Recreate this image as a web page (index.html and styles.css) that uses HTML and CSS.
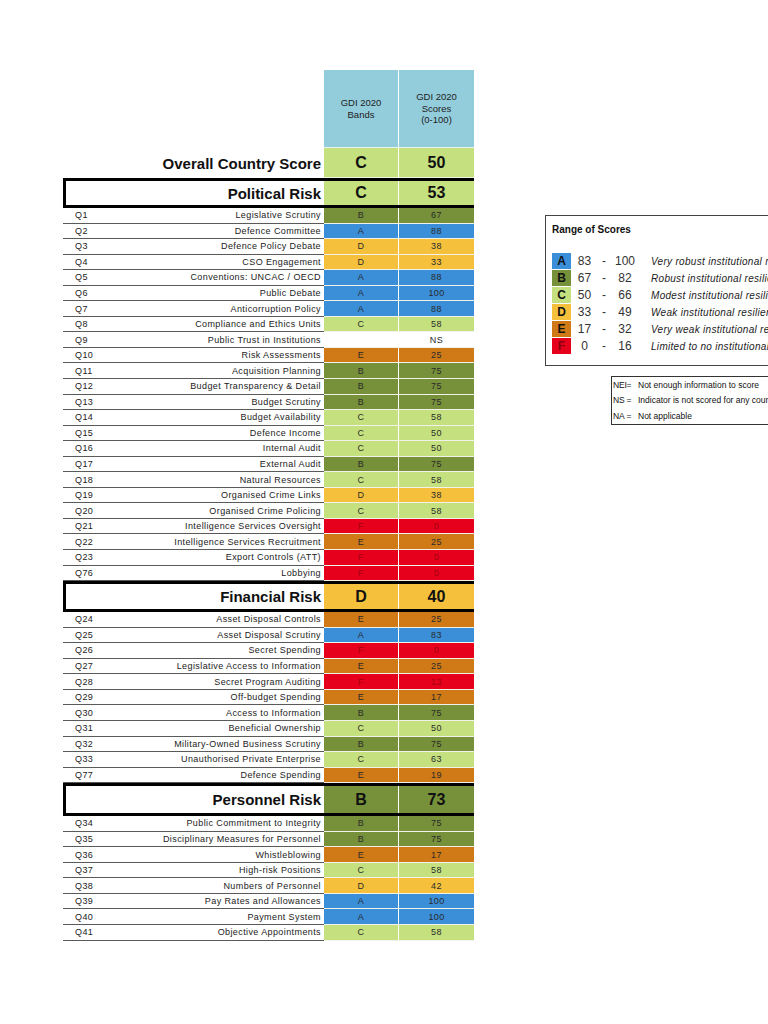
FILE: index.html
```html
<!DOCTYPE html>
<html>
<head>
<meta charset="utf-8">
<link rel="stylesheet" href="styles.css">
</head>
<body>
<div class="page">
  <div class="sheet">
    <div class="head-row">
      <div class="head-lbl"></div>
      <div class="hcell band">GDI 2020<br>Bands</div>
      <div class="hcell score">GDI 2020<br>Scores<br>(0-100)</div>
    </div>
    <div class="overall">
      <div class="big-lbl">Overall Country Score</div>
      <div class="big-cell band c">C</div>
      <div class="big-cell score c">50</div>
    </div>

    <div class="section sec-pol">
      <div class="big-lbl">Political Risk</div>
      <div class="big-cell band c">C</div>
      <div class="big-cell score c">53</div>
    </div>
    <div class="row"><div class="lbl"><span>Q1</span><span>Legislative Scrutiny</span></div><div class="cell band b">B</div><div class="cell score b">67</div></div>
    <div class="row"><div class="lbl"><span>Q2</span><span>Defence Committee</span></div><div class="cell band a">A</div><div class="cell score a">88</div></div>
    <div class="row"><div class="lbl"><span>Q3</span><span>Defence Policy Debate</span></div><div class="cell band d">D</div><div class="cell score d">38</div></div>
    <div class="row"><div class="lbl"><span>Q4</span><span>CSO Engagement</span></div><div class="cell band d">D</div><div class="cell score d">33</div></div>
    <div class="row"><div class="lbl"><span>Q5</span><span>Conventions: UNCAC / OECD</span></div><div class="cell band a">A</div><div class="cell score a">88</div></div>
    <div class="row"><div class="lbl"><span>Q6</span><span>Public Debate</span></div><div class="cell band a">A</div><div class="cell score a">100</div></div>
    <div class="row"><div class="lbl"><span>Q7</span><span>Anticorruption Policy</span></div><div class="cell band a">A</div><div class="cell score a">88</div></div>
    <div class="row"><div class="lbl"><span>Q8</span><span>Compliance and Ethics Units</span></div><div class="cell band c">C</div><div class="cell score c">58</div></div>
    <div class="row"><div class="lbl"><span>Q9</span><span>Public Trust in Institutions</span></div><div class="cell band ns"></div><div class="cell score ns">NS</div></div>
    <div class="row"><div class="lbl"><span>Q10</span><span>Risk Assessments</span></div><div class="cell band e">E</div><div class="cell score e">25</div></div>
    <div class="row"><div class="lbl"><span>Q11</span><span>Acquisition Planning</span></div><div class="cell band b">B</div><div class="cell score b">75</div></div>
    <div class="row"><div class="lbl"><span>Q12</span><span>Budget Transparency &amp; Detail</span></div><div class="cell band b">B</div><div class="cell score b">75</div></div>
    <div class="row"><div class="lbl"><span>Q13</span><span>Budget Scrutiny</span></div><div class="cell band b">B</div><div class="cell score b">75</div></div>
    <div class="row"><div class="lbl"><span>Q14</span><span>Budget Availability</span></div><div class="cell band c">C</div><div class="cell score c">58</div></div>
    <div class="row"><div class="lbl"><span>Q15</span><span>Defence Income</span></div><div class="cell band c">C</div><div class="cell score c">50</div></div>
    <div class="row"><div class="lbl"><span>Q16</span><span>Internal Audit</span></div><div class="cell band c">C</div><div class="cell score c">50</div></div>
    <div class="row"><div class="lbl"><span>Q17</span><span>External Audit</span></div><div class="cell band b">B</div><div class="cell score b">75</div></div>
    <div class="row"><div class="lbl"><span>Q18</span><span>Natural Resources</span></div><div class="cell band c">C</div><div class="cell score c">58</div></div>
    <div class="row"><div class="lbl"><span>Q19</span><span>Organised Crime Links</span></div><div class="cell band d">D</div><div class="cell score d">38</div></div>
    <div class="row"><div class="lbl"><span>Q20</span><span>Organised Crime Policing</span></div><div class="cell band c">C</div><div class="cell score c">58</div></div>
    <div class="row"><div class="lbl"><span>Q21</span><span>Intelligence Services Oversight</span></div><div class="cell band f">F</div><div class="cell score f">0</div></div>
    <div class="row"><div class="lbl"><span>Q22</span><span>Intelligence Services Recruitment</span></div><div class="cell band e">E</div><div class="cell score e">25</div></div>
    <div class="row"><div class="lbl"><span>Q23</span><span>Export Controls (ATT)</span></div><div class="cell band f">F</div><div class="cell score f">0</div></div>
    <div class="row"><div class="lbl"><span>Q76</span><span>Lobbying</span></div><div class="cell band f">F</div><div class="cell score f">0</div></div>

    <div class="section sec-fin">
      <div class="big-lbl">Financial Risk</div>
      <div class="big-cell band d">D</div>
      <div class="big-cell score d">40</div>
    </div>
    <div class="row"><div class="lbl"><span>Q24</span><span>Asset Disposal Controls</span></div><div class="cell band e">E</div><div class="cell score e">25</div></div>
    <div class="row"><div class="lbl"><span>Q25</span><span>Asset Disposal Scrutiny</span></div><div class="cell band a">A</div><div class="cell score a">83</div></div>
    <div class="row"><div class="lbl"><span>Q26</span><span>Secret Spending</span></div><div class="cell band f">F</div><div class="cell score f">0</div></div>
    <div class="row"><div class="lbl"><span>Q27</span><span>Legislative Access to Information</span></div><div class="cell band e">E</div><div class="cell score e">25</div></div>
    <div class="row"><div class="lbl"><span>Q28</span><span>Secret Program Auditing</span></div><div class="cell band f">F</div><div class="cell score f">13</div></div>
    <div class="row"><div class="lbl"><span>Q29</span><span>Off-budget Spending</span></div><div class="cell band e">E</div><div class="cell score e">17</div></div>
    <div class="row"><div class="lbl"><span>Q30</span><span>Access to Information</span></div><div class="cell band b">B</div><div class="cell score b">75</div></div>
    <div class="row"><div class="lbl"><span>Q31</span><span>Beneficial Ownership</span></div><div class="cell band c">C</div><div class="cell score c">50</div></div>
    <div class="row"><div class="lbl"><span>Q32</span><span>Military-Owned Business Scrutiny</span></div><div class="cell band b">B</div><div class="cell score b">75</div></div>
    <div class="row"><div class="lbl"><span>Q33</span><span>Unauthorised Private Enterprise</span></div><div class="cell band c">C</div><div class="cell score c">63</div></div>
    <div class="row"><div class="lbl"><span>Q77</span><span>Defence Spending</span></div><div class="cell band e">E</div><div class="cell score e">19</div></div>

    <div class="section sec-per">
      <div class="big-lbl">Personnel Risk</div>
      <div class="big-cell band b">B</div>
      <div class="big-cell score b">73</div>
    </div>
    <div class="row"><div class="lbl"><span>Q34</span><span>Public Commitment to Integrity</span></div><div class="cell band b">B</div><div class="cell score b">75</div></div>
    <div class="row"><div class="lbl"><span>Q35</span><span>Disciplinary Measures for Personnel</span></div><div class="cell band b">B</div><div class="cell score b">75</div></div>
    <div class="row"><div class="lbl"><span>Q36</span><span>Whistleblowing</span></div><div class="cell band e">E</div><div class="cell score e">17</div></div>
    <div class="row"><div class="lbl"><span>Q37</span><span>High-risk Positions</span></div><div class="cell band c">C</div><div class="cell score c">58</div></div>
    <div class="row"><div class="lbl"><span>Q38</span><span>Numbers of Personnel</span></div><div class="cell band d">D</div><div class="cell score d">42</div></div>
    <div class="row"><div class="lbl"><span>Q39</span><span>Pay Rates and Allowances</span></div><div class="cell band a">A</div><div class="cell score a">100</div></div>
    <div class="row"><div class="lbl"><span>Q40</span><span>Payment System</span></div><div class="cell band a">A</div><div class="cell score a">100</div></div>
    <div class="row"><div class="lbl"><span>Q41</span><span>Objective Appointments</span></div><div class="cell band c">C</div><div class="cell score c">58</div></div>
  </div>

  <div class="side">
    <div class="legend">
      <div class="legend-title">Range of Scores</div>
      <div class="legend-rows">
        <div class="sw a">A</div><div class="n1">83</div><div class="dash">-</div><div class="n2">100</div><div class="desc">Very robust institutional resilience to corruption</div>
        <div class="sw b">B</div><div class="n1">67</div><div class="dash">-</div><div class="n2">82</div><div class="desc">Robust institutional resilience to corruption</div>
        <div class="sw c">C</div><div class="n1">50</div><div class="dash">-</div><div class="n2">66</div><div class="desc">Modest institutional resilience to corruption</div>
        <div class="sw d">D</div><div class="n1">33</div><div class="dash">-</div><div class="n2">49</div><div class="desc">Weak institutional resilience to corruption</div>
        <div class="sw e">E</div><div class="n1">17</div><div class="dash">-</div><div class="n2">32</div><div class="desc">Very weak institutional resilience to corruption</div>
        <div class="sw f">F</div><div class="n1">0</div><div class="dash">-</div><div class="n2">16</div><div class="desc">Limited to no institutional resilience to corruption</div>
      </div>
    </div>
    <div class="notes">
      <div class="key">NEI</div><div class="eq">=</div><div class="ntext">Not enough information to score</div>
      <div class="key">NS</div><div class="eq">=</div><div class="ntext">Indicator is not scored for any country</div>
      <div class="key">NA</div><div class="eq">=</div><div class="ntext">Not applicable</div>
    </div>
  </div>
</div>
</body>
</html>
```

FILE: styles.css
```css
html, body {
  margin: 0;
  padding: 0;
  background: #ffffff;
  overflow: hidden;
}
body {
  font-family: "Liberation Sans", Arial, sans-serif;
  color: #222222;
}
.page {
  display: flex;
  align-items: flex-start;
  padding: 70px 0 0 63px;
  width: 1100px;
}
.sheet {
  width: 411px;
  flex: none;
}

/* colour bands */
.a { background: #3a8fd8; }
.b { background: #77913b; }
.c { background: #c5e07e; }
.d { background: #f5c13c; }
.e { background: #cf7a17; }
.f { background: #e6001c; }
.ns { background: #ffffff; }

.band { width: 75px; border-right: 1px solid #ffffff; box-sizing: border-box; }
.score { width: 75px; box-sizing: border-box; }

/* header */
.head-row {
  display: flex;
  height: 78px;
}
.head-lbl { width: 261px; }
.hcell {
  background: #93cddc;
  display: flex;
  align-items: center;
  justify-content: center;
  text-align: center;
  font-size: 9.5px;
  line-height: 11.7px;
  color: #222;
  border-bottom: 1px solid #e8f4f0;
}

/* big rows */
.overall, .section {
  display: flex;
  height: 30px;
  box-sizing: border-box;
}
.section {
  border-top: 3px solid #000;
  border-bottom: 3px solid #000;
  border-left: 3px solid #000;
}
.sec-pol { height: 30px; }
.sec-fin { height: 31px; }
.sec-per { height: 33px; }
.big-lbl {
  flex: 1;
  display: flex;
  align-items: center;
  justify-content: flex-end;
  padding-right: 3px;
  font-size: 15px;
  font-weight: bold;
  letter-spacing: 0;
  color: #111;
}
.big-cell {
  display: flex;
  align-items: center;
  justify-content: center;
  font-size: 16px;
  font-weight: bold;
  color: #111;
}
.overall .big-cell { border-bottom: 1px solid #eef6dc; }

/* regular rows */
.row {
  display: flex;
  height: 15.55px;
  font-size: 9px;
  letter-spacing: 0.4px;
}
.lbl {
  width: 261px;
  display: flex;
  align-items: center;
  justify-content: space-between;
  padding: 0 3px 0 12px;
  box-sizing: border-box;
  border-bottom: 1px solid #5a5a5a;
  color: #222;
}
.cell {
  display: flex;
  align-items: center;
  justify-content: center;
  border-bottom: 1px solid #f2f2ea;
  color: #2a2a2a;
}
.cell.f { color: #a3000f; }

/* legend */
.side {
  margin-left: 71px;
  padding-top: 145px;
  flex: none;
}
.legend {
  width: 320px;
  border: 1px solid #444;
  padding: 8px 0 11px 6px;
  box-sizing: border-box;
}
.legend-title {
  font-size: 10px;
  font-weight: bold;
  line-height: 12px;
  color: #111;
}
.legend-rows {
  margin-top: 17px;
  display: grid;
  grid-template-columns: 19px 27px 12px 30px auto;
  grid-auto-rows: 16px;
  row-gap: 1px;
  align-items: center;
}
.sw {
  height: 16px;
  display: flex;
  align-items: center;
  justify-content: center;
  font-size: 12px;
  font-weight: bold;
  color: #111;
}
.sw.f { color: #8a0010; }
.n1, .n2, .dash {
  text-align: center;
  font-size: 12px;
  color: #333;
}
.desc {
  padding-left: 11px;
  font-size: 10px;
  font-style: italic;
  letter-spacing: 0.3px;
  white-space: nowrap;
  color: #222;
}

/* notes */
.notes {
  margin: 10px 0 0 66px;
  width: 200px;
  border: 1px solid #333;
  display: grid;
  grid-template-columns: 12px 8px auto;
  grid-auto-rows: 15.5px;
  align-items: center;
  padding: 0 0 0 1px;
  font-size: 8.5px;
  color: #111;
  white-space: nowrap;
}
.key { letter-spacing: -0.2px; }
.eq { text-align: center; }
.ntext { padding-left: 5px; letter-spacing: 0; }
```
